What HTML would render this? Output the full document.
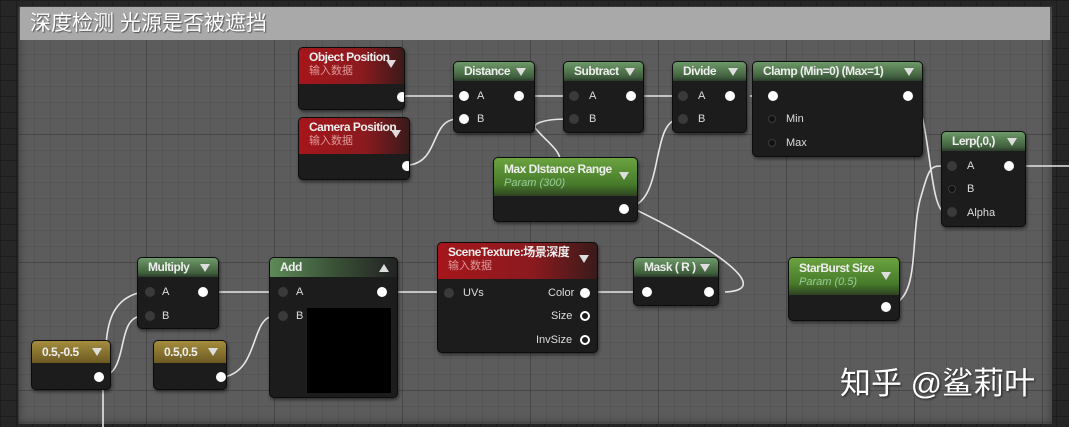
<!DOCTYPE html>
<html><head><meta charset="utf-8"><style>
*{margin:0;padding:0;box-sizing:border-box}
body{width:1069px;height:427px;overflow:hidden;background:#262626;font-family:"Liberation Sans","Noto Sans CJK SC",sans-serif;position:relative;
background-image:linear-gradient(#1d1d1d 1px,transparent 1px),linear-gradient(90deg,#1d1d1d 1px,transparent 1px);background-size:16px 16px}
#cm{position:absolute;left:18px;top:6px;width:1034px;height:418px;background:#5c5c5c;
background-image:linear-gradient(rgba(0,0,0,.08) 1px,transparent 1px),linear-gradient(90deg,rgba(0,0,0,.08) 1px,transparent 1px),linear-gradient(rgba(0,0,0,.15) 1px,transparent 1px),linear-gradient(90deg,rgba(0,0,0,.15) 1px,transparent 1px);
background-size:16px 16px,16px 16px,128px 128px,128px 128px;box-shadow:inset 0 0 10px rgba(0,0,0,.4)}
#tb{position:absolute;left:20px;top:7px;width:1030px;height:33px;background:#a9a9a9;color:#fff;font-size:21px;line-height:33px;padding-left:10px;text-shadow:1px 1px 1px #555}
.n{position:absolute;background:#1c1c1c;border:1px solid #0c0c0c;border-radius:5px;box-shadow:1px 2px 3px rgba(0,0,0,.5);color:#eee;font-size:11px;overflow:hidden}
.h{position:relative;height:19px;line-height:19px;padding-left:10px;font-weight:bold;font-size:12px;letter-spacing:-0.5px;color:#eee}
.g{background:linear-gradient(180deg,#6e9a69,#3f5e3c 80%,#2c3a2b)}
.r{background:linear-gradient(90deg,#a5161b,#8a1a1e 60%,#3a1a1a)}
.y{background:linear-gradient(180deg,#a58d3e,#6b5a22)}
.gp{background:linear-gradient(180deg,#6aa33f,#477a2a 70%,#2f4222)}
.tri{position:absolute;right:8px;top:6px;width:0;height:0;border-left:5px solid transparent;border-right:5px solid transparent;border-top:8px solid #ddd}
.sub{display:block;font-weight:normal;font-size:11px;line-height:13px;color:#d99;letter-spacing:0}
.it{font-style:italic;color:#9c9;font-weight:normal}
.p{position:absolute;font-size:11px;color:#ddd}
.d{position:absolute;width:10px;height:10px;border-radius:50%;background:#fff}
.e{position:absolute;width:10px;height:10px;border-radius:50%;background:#3a3a3a}
.o{position:absolute;width:10px;height:10px;border-radius:50%;border:2px solid #fff}
.k{position:absolute;width:8px;height:8px;border-radius:50%;border:1.5px solid #3a3a3a;background:#111}
</style></head><body>
<div id="cm"></div>
<div id="tb">深度检测 光源是否被遮挡</div>
<svg style="position:absolute;left:0;top:0" width="1069" height="427" fill="none" stroke="#e6e6e6" stroke-width="1.6">
<path d="M405 96 L458 96"/>
<path d="M410 165 C440 160 430 119 458 119"/>
<path d="M525 96 L568 96"/>
<path d="M637 96 L678 96"/>
<path d="M750 96 L770 96"/>
<path d="M910 96 C930 96 928 212 945 212"/>
<path d="M1015 166 L1069 166"/>
<path d="M568 119 C540 119 530 125 537 130 C545 140 560 150 560 160"/>
<path d="M630 207 C665 200 650 119 680 119"/>
<path d="M630 207 C700 240 780 290 725 292"/>
<path d="M590 292 L640 292"/>
<path d="M390 292 L442 292"/>
<path d="M210 292 L275 292"/>
<path d="M103 377 C110 360 95 300 143 292"/>
<path d="M103 377 C130 370 115 316 143 316"/>
<path d="M103 377 L103 427"/>
<path d="M224 377 C260 370 250 316 275 316"/>
<path d="M890 305 C920 300 910 240 920 200 C930 165 930 166 945 166"/>
</svg>

<div class="n" style="left:298px;top:47px;width:107px;height:63px"><div class="h r" style="height:36px;padding-top:2px;line-height:15px">Object Position<span class="sub">输入数据</span><i class="tri" style="top:12px"></i></div><i class="d" style="left:98px;top:44px"></i></div>
<div class="n" style="left:298px;top:117px;width:112px;height:63px"><div class="h r" style="height:36px;padding-top:2px;line-height:15px">Camera Position<span class="sub">输入数据</span><i class="tri" style="top:12px"></i></div><i class="d" style="left:103px;top:43px"></i></div>

<div class="n" style="left:453px;top:61px;width:82px;height:72px"><div class="h g">Distance<i class="tri"></i></div><i class="d" style="left:5px;top:29px"></i><span class="p" style="left:23px;top:28px">A</span><i class="d" style="left:60px;top:29px"></i><i class="d" style="left:5px;top:52px"></i><span class="p" style="left:23px;top:51px">B</span></div>
<div class="n" style="left:563px;top:61px;width:81px;height:72px"><div class="h g">Subtract<i class="tri"></i></div><i class="e" style="left:5px;top:29px"></i><span class="p" style="left:25px;top:28px">A</span><i class="d" style="left:62px;top:29px"></i><i class="e" style="left:5px;top:52px"></i><span class="p" style="left:25px;top:51px">B</span></div>
<div class="n" style="left:672px;top:61px;width:75px;height:72px"><div class="h g">Divide<i class="tri"></i></div><i class="e" style="left:5px;top:29px"></i><span class="p" style="left:25px;top:28px">A</span><i class="d" style="left:52px;top:29px"></i><i class="e" style="left:5px;top:52px"></i><span class="p" style="left:25px;top:51px">B</span></div>
<div class="n" style="left:752px;top:61px;width:171px;height:96px"><div class="h g">Clamp (Min=0) (Max=1)<i class="tri"></i></div><i class="d" style="left:15px;top:29px"></i><i class="d" style="left:150px;top:29px"></i><i class="k" style="left:15px;top:53px"></i><span class="p" style="left:33px;top:51px">Min</span><i class="k" style="left:15px;top:77px"></i><span class="p" style="left:33px;top:75px">Max</span></div>
<div class="n" style="left:941px;top:131px;width:85px;height:96px"><div class="h g">Lerp(,0,)<i class="tri"></i></div><i class="e" style="left:5px;top:29px"></i><span class="p" style="left:25px;top:28px">A</span><i class="d" style="left:62px;top:29px"></i><i class="k" style="left:6px;top:53px"></i><span class="p" style="left:25px;top:51px">B</span><i class="e" style="left:5px;top:75px"></i><span class="p" style="left:25px;top:75px">Alpha</span></div>

<div class="n" style="left:493px;top:157px;width:145px;height:65px"><div class="h gp" style="height:38px;padding-top:3px;line-height:16px">Max DIstance Range<span class="sub it">Param (300)</span><i class="tri" style="top:14px"></i></div><i class="d" style="left:125px;top:46px"></i></div>

<div class="n" style="left:137px;top:257px;width:82px;height:72px"><div class="h g">Multiply<i class="tri"></i></div><i class="e" style="left:7px;top:29px"></i><span class="p" style="left:24px;top:28px">A</span><i class="d" style="left:60px;top:29px"></i><i class="e" style="left:7px;top:53px"></i><span class="p" style="left:24px;top:52px">B</span></div>
<div class="n" style="left:269px;top:257px;width:129px;height:141px"><div class="h g" style="background:linear-gradient(90deg,#5d8a58,#3a5237 50%,#222)">Add<i class="tri" style="border-top:0;border-bottom:8px solid #ddd"></i></div><i class="e" style="left:8px;top:29px"></i><span class="p" style="left:26px;top:28px">A</span><i class="d" style="left:107px;top:29px"></i><i class="e" style="left:8px;top:53px"></i><span class="p" style="left:26px;top:52px">B</span><div style="position:absolute;left:37px;top:50px;width:84px;height:85px;background:#000"></div></div>
<div class="n" style="left:437px;top:242px;width:161px;height:111px"><div class="h r" style="height:36px;padding-top:2px;line-height:15px">SceneTexture:场景深度<span class="sub">输入数据</span><i class="tri" style="top:12px"></i></div><i class="e" style="left:6px;top:45px"></i><span class="p" style="left:25px;top:44px">UVs</span><span class="p" style="left:110px;top:44px">Color</span><i class="d" style="left:142px;top:45px"></i><span class="p" style="left:113px;top:67px">Size</span><i class="o" style="left:142px;top:68px"></i><span class="p" style="left:98px;top:91px">InvSize</span><i class="o" style="left:142px;top:92px"></i></div>
<div class="n" style="left:633px;top:257px;width:86px;height:49px"><div class="h g">Mask ( R )<i class="tri"></i></div><i class="d" style="left:8px;top:29px"></i><i class="d" style="left:70px;top:29px"></i></div>
<div class="n" style="left:788px;top:257px;width:112px;height:64px"><div class="h gp" style="height:37px;padding-top:2px;line-height:16px">StarBurst Size<span class="sub it">Param (0.5)</span><i class="tri" style="top:14px"></i></div><i class="d" style="left:92px;top:44px"></i></div>
<div class="n" style="left:31px;top:340px;width:80px;height:50px"><div class="h y" style="height:22px;line-height:22px">0.5,-0.5<i class="tri" style="top:7px"></i></div><i class="d" style="left:62px;top:31px"></i></div>
<div class="n" style="left:153px;top:340px;width:74px;height:50px"><div class="h y" style="height:22px;line-height:22px">0.5,0.5<i class="tri" style="top:7px"></i></div><i class="d" style="left:62px;top:31px"></i></div>

<div style="position:absolute;left:840px;top:358px;font-size:31px;color:#fff;text-shadow:1px 1px 2px #222">知乎 @鲨莉叶</div>
</body></html>
